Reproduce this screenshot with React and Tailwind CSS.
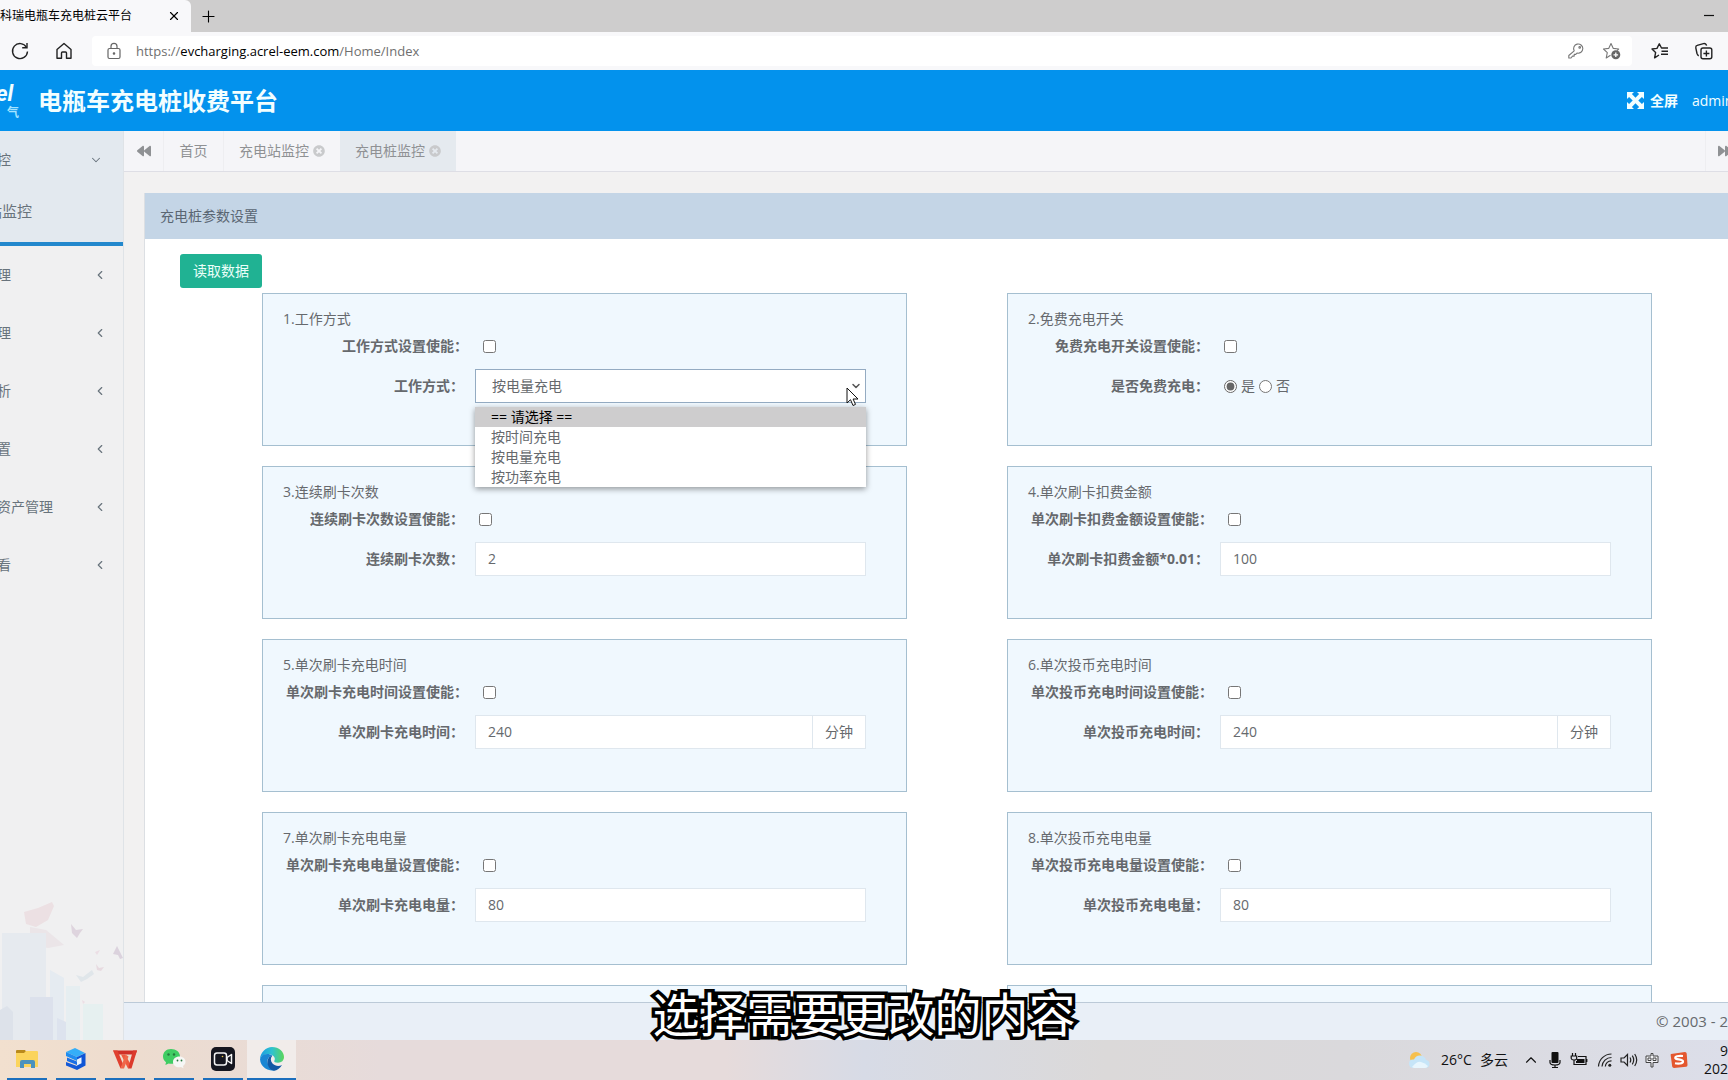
import { useState } from "react";
import { ChevronDown, ChevronLeft, ChevronUp, Plus, X } from "lucide-react";
import { FaBackward, FaForward, FaTimesCircle } from "react-icons/fa";

const menuItems = ["理", "理", "析", "置", "资产管理", "看"];

const workModes = ["== 请选择 ==", "按时间充电", "按电量充电", "按功率充电"];

const settings = [
  {
    id: "mode",
    title: "1.工作方式",
    enable: "工作方式设置使能：",
    label: "工作方式：",
    type: "select",
    wide: true,
  },
  {
    id: "free",
    title: "2.免费充电开关",
    enable: "免费充电开关设置使能：",
    label: "是否免费充电：",
    type: "radio",
  },
  {
    id: "swipes",
    title: "3.连续刷卡次数",
    enable: "连续刷卡次数设置使能：",
    label: "连续刷卡次数：",
    value: "2",
  },
  {
    id: "fee",
    title: "4.单次刷卡扣费金额",
    enable: "单次刷卡扣费金额设置使能：",
    label: "单次刷卡扣费金额*0.01：",
    value: "100",
    wide: true,
  },
  {
    id: "cardTime",
    title: "5.单次刷卡充电时间",
    enable: "单次刷卡充电时间设置使能：",
    label: "单次刷卡充电时间：",
    value: "240",
    unit: "分钟",
    wide: true,
  },
  {
    id: "coinTime",
    title: "6.单次投币充电时间",
    enable: "单次投币充电时间设置使能：",
    label: "单次投币充电时间：",
    value: "240",
    unit: "分钟",
    wide: true,
  },
  {
    id: "cardPower",
    title: "7.单次刷卡充电电量",
    enable: "单次刷卡充电电量设置使能：",
    label: "单次刷卡充电电量：",
    value: "80",
    wide: true,
  },
  {
    id: "coinPower",
    title: "8.单次投币充电电量",
    enable: "单次投币充电电量设置使能：",
    label: "单次投币充电电量：",
    value: "80",
    wide: true,
  },
];

function BrowserBar() {
  return (
    <div className="shrink-0 text-black">
      <div className="flex h-8 items-stretch bg-[#cecdcd]">
        <div className="flex w-[191px] items-center justify-between rounded-tr-md bg-[#f8f8fa] pr-[10px] text-xs">
          <span className="whitespace-nowrap">科瑞电瓶车充电桩云平台</span>
          <button aria-label="Close tab">
            <X size={14} strokeWidth={2} />
          </button>
        </div>
        <button className="ml-2" aria-label="New tab">
          <Plus size={19} strokeWidth={1.4} />
        </button>
        <button className="mr-3 ml-auto" aria-label="Minimize">
          <svg width="14" height="14" viewBox="0 0 14 14">
            <path d="M2 6.5h10" stroke="#111" strokeWidth="1.2" />
          </svg>
        </button>
      </div>

      <div className="flex h-[38px] items-center bg-[#f8f8fa]">
        <button className="ml-[10px]" aria-label="Refresh">
          <svg width="20" height="20" viewBox="0 0 20 20" fill="none" stroke="#222" strokeWidth="1.4">
            <path d="M16.5 6.3A7.5 7.5 0 1 0 17.5 10.5" />
            <path d="M17 2v4.8h-4.8" />
          </svg>
        </button>
        <button className="ml-6" aria-label="Home">
          <svg width="20" height="20" viewBox="0 0 20 20" fill="none" stroke="#222" strokeWidth="1.4" strokeLinejoin="round">
            <path d="M3 8.5 10 2.5l7 6V17.3h-4.5V12a1 1 0 0 0-1-1h-3a1 1 0 0 0-1 1v5.3H3z" />
          </svg>
        </button>
        <div className="ml-[18px] flex h-[30px] flex-1 items-center rounded bg-white pr-[10px] pl-3">
          <svg width="20" height="20" viewBox="0 0 20 20" fill="none" stroke="#666" strokeWidth="1.2">
            <rect x="4" y="7.5" width="12" height="10" rx="1.5" />
            <path d="M7 7.5V5.3a3 3 0 0 1 6 0v2.2" />
            <circle cx="10" cy="12.5" r="0.7" fill="#666" />
          </svg>
          <span className="ml-3 text-[13px] text-[#6f6f6f]">
            https://<span className="text-black">evcharging.acrel-eem.com</span>/Home/Index
          </span>
          <div className="ml-auto flex items-center gap-[17px] text-[#777]">
            <svg width="18" height="18" viewBox="0 0 18 18" fill="none" stroke="currentColor" strokeWidth="1.1" strokeLinejoin="round">
              <path d="M7.200 8.800A4.600 4.600 0 1 1 10 11L8.800 12.400H7.200v1.700H5.500L4 16H1.800v-2.500z" />
              <circle cx="12.700" cy="5.400" r="0.800" />
            </svg>
            <svg width="20" height="20" viewBox="0 0 20 20" fill="none" stroke="currentColor" strokeWidth="1.1" strokeLinejoin="round">
              <path d="M8.5 14.3 4.2 17l1.1-5.4L1.5 8l5.2-.6L9 2.5l2.3 4.9 5.4.6-1.600 1.600" />
              <circle cx="13.8" cy="13.8" r="4.5" fill="#666" stroke="none" />
              <path d="M11.5 13.8h4.600M13.8 11.5v4.600" stroke="#fff" strokeWidth="1.3" />
            </svg>
          </div>
        </div>
        <button className="ml-[18px]" aria-label="Favorites">
          <svg width="20" height="20" viewBox="0 0 20 20" fill="none" stroke="#222" strokeWidth="1.4" strokeLinejoin="round">
            <path d="M9 14 4.600 16.8l1-5.2L2 8l5-.6L9.3 2.8 11.5 7H18M11.500 10.200H18M11 13.200h7" />
          </svg>
        </button>
        <button className="mr-[14px] ml-6" aria-label="Collections">
          <svg width="20" height="20" viewBox="0 0 20 20" fill="none" stroke="#222" strokeWidth="1.4" strokeLinejoin="round">
            <rect x="7" y="7" width="10.800" height="10.800" rx="2" />
            <path d="M12.400 9.500v6M9.400 12.500h6M4.800 14.800C3.700 14.500 3.300 13.500 3 12.500L1.800 6.800C1.600 5.500 2 4.700 3.200 4.400L9.500 2.600C11 2.200 12.200 3 12.600 4.600" />
          </svg>
        </button>
      </div>
    </div>
  );
}

function Header() {
  return (
    <header className="flex h-[61px] shrink-0 items-center overflow-hidden bg-[#0392ed] text-[#f2feff]">
      <div className="flex w-[38px] shrink-0 flex-col">
        <b className="-ml-1 font-[Roboto] text-[22px] leading-6 italic">el</b>
        <span className="ml-[7px] text-xs leading-[14px] font-bold text-[#a5e3ff]">气</span>
      </div>
      <h1 className="text-2xl font-bold">电瓶车充电桩收费平台</h1>
      <button className="ml-auto flex shrink-0 items-center gap-[6px] text-sm font-bold">
        <svg width="17" height="17" viewBox="0 0 17 17" fill="currentColor">
          <path d="M0 0h7L4.900 2.100 8.500 5.700 12.100 2.100 10 0h7v7l-2.100-2.100L11.300 8.500l3.600 3.600L17 10v7h-7l2.100-2.100-3.600-3.600-3.600 3.600L7 17H0v-7l2.100 2.100L5.700 8.500 2.100 4.900 0 7z" />
        </svg>
        全屏
      </button>
      <div className="ml-[14px] w-9 shrink-0 overflow-hidden text-sm">admin</div>
    </header>
  );
}

function CityArt() {
  return (
    <svg className="mt-auto block w-full opacity-90" viewBox="0 0 123 140" aria-hidden="true">
      <path d="M24 12 38 8 52 2 54 6 48 20 36 27 26 24z" fill="#ecdfe2" />
      <path d="M30 27 46 30 64 45 48 48 30 44z" fill="#ebe4e8" />
      <path d="M2 33h44v107H2z" fill="#e5eaef" />
      <path d="M50 70 64 78v62H50z" fill="#e4ebf1" />
      <path d="M66 86h14v54H66z" fill="#e5eef2" />
      <path d="M83 104h20v36H83z" fill="#e6f0f0" />
      <path d="M30 97h23v43H30z" fill="#dae0ec" />
      <path d="M0 110 7 106 13 112v28H0z" fill="#dbe1ea" />
      <path d="M57 118 66 122v18H57z" fill="#dbe2ee" />
      <path d="M71 24l5 6 7-1-3 4-3 5-5-5z" fill="#ddd2dc" />
      <path d="M113 54l4-8 3 6 3 6-3 1-2-4z" fill="#d9cfdb" />
      <path d="M96 64l3 4 5-1-3 4-4-1z" fill="#e7d8df" />
      <path d="M76 75l7 2 9-7 2 4-7 5-6 3z" fill="#dfe5ea" />
      <path d="M82 100l3 2-2 2zM95 52l5-2-3 5z" fill="#ecdde4" />
    </svg>
  );
}

function Sidebar() {
  return (
    <aside className="flex w-[124px] shrink-0 flex-col overflow-hidden border-r border-[#dfe3e7] bg-[#f0f0f1] text-[#68737c]">
      <div className="h-[115px] shrink-0 border-b-4 border-[#2388cd] bg-[#e3e9ef] pt-[2px]">
        <a href="#monitor" className="flex h-[54px] items-center justify-between pr-5 text-sm">
          <span className="-ml-[3px]">控</span>
          <ChevronDown size={14} strokeWidth={1.8} />
        </a>
        <a href="#station" className="flex h-[50px] items-center text-[15px]">
          <span className="-ml-[13px]">站监控</span>
        </a>
      </div>
      <nav className="shrink-0">
        {menuItems.map((item, i) => (
          <a key={i} href="#menu" className="flex h-[58px] items-center justify-between pr-4 text-sm">
            <span className="-ml-[3px]">{item}</span>
            <ChevronLeft size={14} strokeWidth={2} />
          </a>
        ))}
      </nav>
      <CityArt />
    </aside>
  );
}

function PageTabs() {
  return (
    <div className="flex h-[41px] shrink-0 items-stretch border-b border-[#dedee5] bg-[#f5f5f8] text-sm text-[#8f9194]">
      <button className="flex w-10 items-center border-r border-[#eeeef1] pl-[13px]" aria-label="Scroll left">
        <FaBackward size={14} />
      </button>
      <button className="w-[60px] border-r border-[#eeeef1]">首页</button>
      <button className="flex items-center gap-1 px-[15px]">
        充电站监控
        <FaTimesCircle size={12} className="text-[#c9cacc]" />
      </button>
      <button className="flex items-center gap-1 bg-[#e5eaef] px-[15px]">
        充电桩监控
        <FaTimesCircle size={12} className="text-[#c9cacc]" />
      </button>
      <button
        className="ml-auto flex w-[23px] items-center overflow-hidden border-l border-[#eeeef1] pl-3"
        aria-label="Scroll right"
      >
        <FaForward size={14} className="shrink-0" />
      </button>
    </div>
  );
}

function ModeSelect() {
  const [mode, setMode] = useState("按电量充电");

  return (
    <div className="relative">
      <select
        id="mode"
        value={mode}
        onChange={(e) => setMode(e.target.value)}
        className="h-[34px] w-full appearance-none border border-[#94abc2] bg-white px-4 outline-none"
      >
        {workModes.map((m) => (
          <option key={m}>{m}</option>
        ))}
      </select>
      <ChevronDown size={12} strokeWidth={3} className="absolute top-[11px] right-1 text-[#555]" />

      {/* open option list */}
      <ul className="absolute top-[38px] left-0 z-10 w-full bg-white leading-5 shadow-[0_2px_6px_rgba(0,0,0,0.4)]">
        {workModes.map((m, i) => (
          <li
            key={m}
            onClick={() => setMode(m)}
            className={i === 0 ? "bg-[#cecdce] px-4 text-black" : "px-4"}
          >
            {m}
          </li>
        ))}
      </ul>

      <svg className="absolute top-[18px] right-[7px] z-20" width="13" height="20" viewBox="0 0 13 20">
        <path
          d="M1 1v15l3.500-3.300L7 18.500l2.500-1.100L7.100 12H12z"
          fill="#fff"
          stroke="#111"
          strokeWidth="1"
        />
      </svg>
    </div>
  );
}

function SettingControl({ item }) {
  if (item.type === "select") return <ModeSelect />;

  if (item.type === "radio") {
    return (
      <div className="flex h-[34px] items-center gap-1 pl-1">
        <label className="flex items-center gap-1">
          <input id={item.id} type="radio" name="free" defaultChecked className="size-[13px] accent-[#666]" />是
        </label>
        <label className="flex items-center gap-1">
          <input type="radio" name="free" className="size-[13px]" />否
        </label>
      </div>
    );
  }

  return (
    <div className="flex h-[34px] border border-[#dfe7ee] bg-white">
      <input id={item.id} defaultValue={item.value} className="min-w-0 flex-1 px-3 outline-none" />
      {item.unit && (
        <span className="flex items-center border-l border-[#dfe7ee] px-3">{item.unit}</span>
      )}
    </div>
  );
}

function SettingCard({ item }) {
  return (
    <section className="border border-[#a5bfd0] bg-[#f0f8fe] px-5 pt-[15px] pb-[42px]">
      <h3 className="leading-5">{item.title}</h3>
      <div className="flex h-[34px] items-center">
        <label
          htmlFor={`${item.id}-enable`}
          className={
            item.wide
              ? "w-[196px] pr-[11px] text-right font-bold whitespace-nowrap"
              : "w-48 pr-[11px] text-right font-bold whitespace-nowrap"
          }
        >
          {item.enable}
        </label>
        <input id={`${item.id}-enable`} type="checkbox" className="ml-1 size-[13px]" />
      </div>
      <div className="mt-[6px] flex items-center">
        <label
          htmlFor={item.id}
          className="w-48 shrink-0 pr-[11px] text-right font-bold whitespace-nowrap"
        >
          {item.label}
        </label>
        <div className="mr-5 flex-1">
          <SettingControl item={item} />
        </div>
      </div>
    </section>
  );
}

const apps = [
  {
    name: "Explorer",
    icon: (
      <svg width="24" height="24" viewBox="0 0 24 24">
        <path d="M1 4q0-1 1-1h8l2 3H1z" fill="#b98a1c" />
        <path d="M1 6h8l2-2h11q1 0 1 1v15H1z" fill="#fbd45c" />
        <path d="M5 21v-6q0-2 2-2h11q2 0 2 2v6h-4v-4H9v4z" fill="#4b92bd" />
      </svg>
    ),
  },
  {
    name: "Cube",
    icon: (
      <svg width="24" height="24" viewBox="0 0 24 24">
        <path d="M11 1 21 6 13 10 2 5z" fill="#35aef8" />
        <path d="M2 5l11 5v4L2 9z" fill="#1f8cf0" />
        <path d="M3 10.500l10 4v3.500L3 14z" fill="#1a6fe6" />
        <path d="M2 15l11 4v4L2 18.500z" fill="#1459d8" />
        <path d="M13 10l8.500-4v12.500L13 23z" fill="#0f55d6" />
        <path d="M13 12.500l4.500-2.200v6L13 18.500z" fill="#e9f4ff" />
      </svg>
    ),
  },
  {
    name: "WPS",
    icon: (
      <svg width="26" height="24" viewBox="0 0 26 24">
        <path d="M1 3.500h24l-1.500 4H5z" fill="#cf2f28" />
        <path d="M1 3.500h4.500L11 17l-2.500 4.500z" fill="#e0402f" />
        <path d="M9 7.500h4L18.500 17 16 21.500z" fill="#ee5a3f" />
        <path d="M13.500 7.500 8.500 21.500h3.500l4.500-12z" fill="#f0674a" />
        <path d="M25 3.500 19.500 21.500H16L21 3.500z" fill="#dc3a2c" />
      </svg>
    ),
  },
  {
    name: "WeChat",
    icon: (
      <svg width="24" height="24" viewBox="0 0 24 24">
        <path d="M9 2C4 2 1 5.500 1 9.500c0 2.500 1.200 4.400 3 5.700L3.400 18l3.300-1.600c4.500 1.300 11.300-1 11.300-7C18 5 14 2 9 2z" fill="#3fcd63" />
        <path d="M17.500 9.500c-4 0-6.500 2.500-6.500 5.400 0 3.800 4 6.100 8 5l2.500 1.300-.5-2.200c1.700-1.200 2.500-2.600 2.500-4.200 0-3-2.500-5.300-6-5.300z" fill="#f6f7f5" />
        <g fill="#257a3d">
          <circle cx="6.500" cy="7.500" r="1.200" />
          <circle cx="12" cy="7.500" r="1.200" />
          <circle cx="15.500" cy="13.500" r="0.900" />
          <circle cx="19.500" cy="13.500" r="0.900" />
        </g>
      </svg>
    ),
  },
  {
    name: "Recorder",
    icon: (
      <svg width="24" height="24" viewBox="0 0 24 24" fill="none" stroke="#f4f4f4" strokeWidth="1.5">
        <rect width="24" height="24" rx="5" fill="#15161f" stroke="none" />
        <rect x="3.500" y="6" width="12" height="12" rx="2.500" />
        <path d="M16 10.500l4.500-3v9l-4.500-3z" strokeLinejoin="round" />
        <circle cx="11.500" cy="9.500" r="0.800" fill="#e8c44a" stroke="none" />
      </svg>
    ),
  },
];

function Taskbar() {
  return (
    <footer className="flex h-10 shrink-0 items-stretch overflow-hidden bg-[linear-gradient(to_right,#f2e0cf_0%,#eddccf_8%,#e6dbdb_22%,#e6dbdb_42%,#d7dbe6_50%,#dbd9d9_64%,#dad9dc_78%,#dcdee9_100%)] pl-[2px] text-[#111]">
      {apps.map((app) => (
        <button key={app.name} aria-label={app.name} className="flex w-[49px] flex-col items-center">
          <span className="flex flex-1 items-center">{app.icon}</span>
          <span className="h-[2px] w-10 bg-[#1c6fbd]" />
        </button>
      ))}
      <button aria-label="Edge" className="flex w-[49px] flex-col items-center bg-[#f1ecea]">
        <span className="flex flex-1 items-center">
          <svg width="24" height="24" viewBox="0 0 24 24">
            <defs>
              <linearGradient id="edgeTop" x1="0" x2="1">
                <stop offset="0" stopColor="#1b9de2" />
                <stop offset="0.5" stopColor="#2fc2cf" />
                <stop offset="1" stopColor="#5bd659" />
              </linearGradient>
            </defs>
            <path d="M0 12C.5 5 6 0 12 0c7 0 12 4.600 12 10 0 3.500-2.500 5.700-6 5.700-3 0-4.200-1-3.700-2 .8-1.200.7-2.700-.3-4C11 5.500 3 6 0 12z" fill="url(#edgeTop)" />
            <path d="M0 12C1.500 7 8 5.500 12.500 8.500 9 9 7 12 7.500 15c.5 4 4 7 8 8A12 12 0 0 1 0 12z" fill="#1a86d3" />
            <path d="M7.500 14c.5-3 2-5 4.800-5.200-2 2-2 5.200.2 7.700 2.500 2.700 6.500 3 9.500 1.500C20 21.500 17 23.500 14 23.800 10 23 7 19 7.500 14z" fill="#1259a4" />
          </svg>
        </span>
        <span className="h-[2px] w-full bg-[#1c6fbd]" />
      </button>

      <div className="ml-auto flex items-center">
        <svg width="22" height="18" viewBox="0 0 22 18">
          <circle cx="8" cy="7" r="6" fill="#f6c04e" />
          <path d="M6 17q-5 0-5-4.500T6 8.500Q8 4 12.500 4.500T18 9q3.500.5 3.500 4T18 17z" fill="#c6e5f8" />
          <path d="M4 16q5-6 9-5t7 4q-1 2-3 2H6z" fill="#e8f6fd" />
        </svg>
        <span className="ml-[11px] w-[39px] text-sm whitespace-nowrap">26°C</span>
        <span className="text-sm whitespace-nowrap">多云</span>
        <ChevronUp size={18} strokeWidth={1.5} className="ml-[14px]" />
        <svg className="ml-2" width="14" height="18" viewBox="0 0 14 18" fill="#111">
          <rect x="3.500" y="1" width="7" height="11" rx="1" />
          <path d="M2 9v2.500q0 2.500 5 2.500t5-2.500V9M7 14v2.500M4 16.500h6" fill="none" stroke="#111" strokeWidth="1.2" />
        </svg>
        <svg className="ml-2" width="18" height="16" viewBox="0 0 18 16" fill="none" stroke="#111" strokeWidth="1.2">
          <path d="M2.500 1v3M5.500 1v3M1.200 4h5.500v2.500Q6.500 8 4 8 1.500 8 1.200 6.500zM4 8v4.500h12v-8H8M16.800 7v3" />
          <path d="M7 7h7.500v4H6V9h1z" fill="#111" stroke="none" />
        </svg>
        <svg className="ml-[9px]" width="16" height="16" viewBox="0 0 16 16" fill="none" stroke="#222" strokeWidth="1.2">
          <path d="M1.500 14.500A13 13 0 0 1 14.500 2M5 14.500A9.500 9.500 0 0 1 14.500 5.500M8.300 14.500a6 6 0 0 1 6.200-5.700" />
          <circle cx="12.800" cy="13.200" r="1.500" fill="#222" stroke="none" />
        </svg>
        <svg className="ml-[7px]" width="18" height="16" viewBox="0 0 18 16" fill="none" stroke="#222" strokeWidth="1.2">
          <path d="M1 6h3l3.500-3.500v11L4 10H1zM10 5.500q1.500 2.500 0 5M12.300 3.700q2.800 4.300 0 8.600M14.700 2q4 6 0 12" />
        </svg>
        <svg className="ml-[6px]" width="16" height="16" viewBox="0 0 16 16" fill="#f2f2f6" stroke="#444" strokeWidth="1">
          <path d="M7 1.500h2V4h5v6.500H9V15H7v-4.500H2V4h5z" />
          <path d="M4 6h3v2.500H4zM9 6h3v2.500H9z" />
        </svg>
        <svg className="ml-[10px]" width="18" height="18" viewBox="0 0 18 18">
          <path d="M1 3 15 1q1.500 0 1.700 1.500L17.500 14q0 1.500-1.300 1.700L4 17q-1.500 0-1.800-1.400L.7 4.500Q.500 3.200 1 3z" fill="#e4572e" />
          <path d="M13 5Q5 4.500 5.300 7c.2 2 7.700.6 7.700 3.500 0 2.300-5 2.500-8 1.800" fill="none" stroke="#fff" strokeWidth="2.2" />
        </svg>
        <div className="ml-4 w-6 overflow-hidden text-sm leading-[18px] whitespace-nowrap">
          <div className="pl-4">9:</div>
          <div>2021</div>
        </div>
      </div>
    </footer>
  );
}

function App() {
  return (
    <div className="relative flex h-screen flex-col overflow-hidden bg-[#f2f1f1] font-['Open_Sans','Noto_Sans_CJK_SC',sans-serif] text-sm text-[#66696d]">
      <BrowserBar />
      <Header />

      <div className="flex min-h-0 flex-1">
        <Sidebar />
        <main className="flex min-w-0 flex-1 flex-col">
          <PageTabs />
          <div className="min-h-0 flex-1 overflow-hidden pt-[21px] pl-5">
            <div className="border-l border-[#dcdfe3] bg-white">
              <h2 className="flex h-[46px] items-center bg-[#c4d5e6] pl-[15px] text-[#5a6673]">
                充电桩参数设置
              </h2>
              <div className="pt-[15px] pl-[35px]">
                <button className="h-[34px] rounded-[3px] bg-[#20b293] px-[13px] text-[#eafff9]">
                  读取数据
                </button>
              </div>
              <div className="grid grid-cols-2 gap-x-[100px] gap-y-5 pt-[5px] pr-[76px] pl-[117px]">
                {settings.map((item) => (
                  <SettingCard key={item.id} item={item} />
                ))}
                <section className="h-[153px] border border-[#a5bfd0] bg-[#f0f8fe]" />
                <section className="h-[153px] border border-[#a5bfd0] bg-[#f0f8fe]" />
              </div>
            </div>
          </div>
          <div className="flex h-[38px] shrink-0 items-center justify-end overflow-hidden border-t border-[#bccad8] bg-[#e9eff7] text-[15px] whitespace-nowrap">
            © 2003 - 2
          </div>
        </main>
      </div>

      <Taskbar />

      {/* video caption */}
      <p className="pointer-events-none absolute inset-x-0 bottom-[34px] z-30 text-center text-[47px] leading-[64px] text-white [-webkit-text-stroke:7px_black] [paint-order:stroke_fill]">
        选择需要更改的内容
      </p>
    </div>
  );
}

export default App;
